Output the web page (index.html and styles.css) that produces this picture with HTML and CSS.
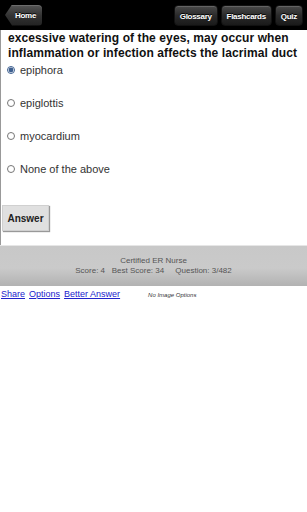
FILE: index.html
```html
<!DOCTYPE html>
<html lang="en">
<head>
    <meta charset="UTF-8">
    <meta name="viewport" content="width=device-width, initial-scale=1.0">
    <title>Certified ER Nurse</title>
    <link rel="stylesheet" href="styles.css">
</head>
<body>
    <div class="header">
        <a class="btn back" href="#">Home</a>
        <div class="nav">
            <a class="btn" href="#">Glossary</a>
            <a class="btn" href="#">Flashcards</a>
            <a class="btn" href="#">Quiz</a>
        </div>
    </div>
    <div class="content">
        <p class="question">excessive watering of the eyes, may occur when inflammation or infection affects the lacrimal duct</p>
        <form class="choices">
            <label class="choice"><input type="radio" name="a" checked> epiphora</label>
            <label class="choice"><input type="radio" name="a"> epiglottis</label>
            <label class="choice"><input type="radio" name="a"> myocardium</label>
            <label class="choice"><input type="radio" name="a"> None of the above</label>
        </form>
        <button class="answer" type="button">Answer</button>
    </div>
    <div class="footer">
        <div>Certified ER Nurse</div>
        <div>Score: 4&nbsp;&nbsp; Best Score: 34&nbsp;&nbsp;&nbsp;&nbsp; Question: 3/482</div>
    </div>
    <div class="links">
        <a href="#">Share</a>
        <a href="#">Options</a>
        <a href="#">Better Answer</a>
        <span class="noimg">No Image Options</span>
    </div>
</body>
</html>
```

FILE: styles.css
```css
* {
    margin: 0;
    padding: 0;
    box-sizing: border-box;
}
body {
    font-family: 'Liberation Sans', Arial, sans-serif;
    background-color: #fff;
    color: #222;
    width: 307px;
}
.header {
    background-color: #000;
    height: 30px;
    display: flex;
    justify-content: space-between;
    align-items: center;
    padding: 0 4px 0 5px;
}
.nav {
    display: flex;
    gap: 3px;
}
.btn {
    display: block;
    height: 21px;
    line-height: 21px;
    padding: 0 5px;
    font-size: 8px;
    font-weight: bold;
    color: #fff;
    text-decoration: none;
    letter-spacing: -0.3px;
    background: linear-gradient(#4a4a4a, #2a2a2a 50%, #1a1a1a);
    border: 1px solid #111;
    border-radius: 4px;
    box-shadow: inset 0 1px 0 rgba(255,255,255,0.15);
    text-shadow: 0 -1px 0 #000;
}
.back {
    padding: 0 6px 0 10px;
    border: none;
    border-radius: 0 4px 4px 0;
    clip-path: polygon(7px 0, 100% 0, 100% 100%, 7px 100%, 0 50%);
    background: linear-gradient(#555, #333 50%, #222);
}
.content {
    border-left: 1px solid #999;
    padding-bottom: 14px;
}
.question {
    font-size: 12px;
    font-weight: bold;
    line-height: 15px;
    letter-spacing: 0.1px;
    color: #111;
    padding: 1px 0 0 7px;
}
.choices {
    display: flex;
    flex-direction: column;
    gap: 17px;
    padding: 1px 0 0 5px;
}
.choice {
    display: flex;
    align-items: center;
    gap: 5px;
    font-size: 11px;
    color: #333;
    height: 16px;
}
.choice input {
    width: 8px;
    height: 8px;
    margin: 0 0 0 1px;
    accent-color: #3d5f8f;
}
.answer {
    margin: 28px 0 0 1px;
    width: 47px;
    height: 26px;
    font-family: 'Liberation Sans', Arial, sans-serif;
    font-size: 10px;
    font-weight: bold;
    color: #222;
    background-color: #e0e0e0;
    border: none;
    box-shadow: 1px 1px 1px #999, inset 0 0 0 1px #d0d0d0;
}
.footer {
    height: 41px;
    background: linear-gradient(#c8c8c8, #cacaca 55%, #b2b2b2);
    border-top: 1px solid #e6e6e6;
    text-align: center;
    font-size: 8px;
    line-height: 10px;
    color: #555;
    padding-top: 10px;
}
.links {
    display: flex;
    align-items: baseline;
    padding: 3px 0 0 1px;
    font-size: 9px;
}
.links a {
    color: #22c;
    margin-right: 4px;
}
.noimg {
    font-size: 6px;
    font-style: italic;
    color: #333;
    margin-left: 24px;
}
```
